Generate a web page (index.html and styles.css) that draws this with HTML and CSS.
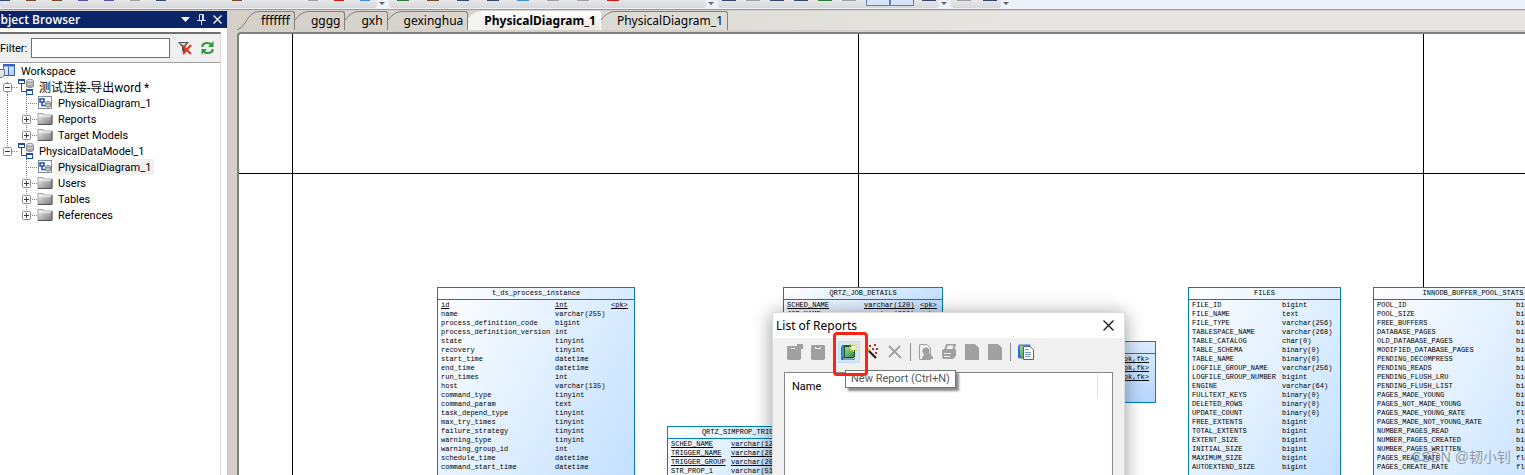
FILE: index.html
```
<!DOCTYPE html>
<html lang="en">

<head>
  <title>Physical Data Model</title>
  <meta charset="utf-8" />
  <meta name="viewport" content="width=device-width, initial-scale=1.0" />
  <link rel="stylesheet" href="styles.css">
</head>

<body>
  <!-- shared icons -->
  <svg class="sprite" aria-hidden="true">
    <defs>
      <linearGradient id="folderFill" x1="0" y1="0" x2="1" y2="1">
        <stop offset="0" stop-color="#f4f4f4" />
        <stop offset="1" stop-color="#777" />
      </linearGradient>
      <linearGradient id="greenFill" x1="0" y1="0" x2="1" y2="1">
        <stop offset="0" stop-color="#a5dca0" />
        <stop offset="1" stop-color="#2a8a33" />
      </linearGradient>
      <linearGradient id="blueFill" x1="0" y1="0" x2="1" y2="1">
        <stop offset="0" stop-color="#fff" />
        <stop offset="1" stop-color="#9fc0f5" />
      </linearGradient>
    </defs>
    <symbol id="rail" viewBox="0 0 38 16">
      <path class="dots" d="M7.500 0V16" />
    </symbol>
    <symbol id="branch" viewBox="0 0 38 16">
      <path class="dots" d="M26.500 0V16M26 8.500H37" />
    </symbol>
    <symbol id="branch-end" viewBox="0 0 38 16">
      <path class="dots" d="M26.500 0V8M26 8.500H37" />
    </symbol>
    <symbol id="plus" viewBox="0 0 9 9">
      <rect x=".5" y=".5" width="8" height="8" rx="1" fill="#fff" stroke="#8a8a8a" />
      <path d="M2 4.500H7M4.500 2V7" stroke="#24386e" />
    </symbol>
    <symbol id="minus" viewBox="0 0 9 9">
      <rect x=".5" y=".5" width="8" height="8" rx="1" fill="#fff" stroke="#8a8a8a" />
      <path d="M2 4.500H7" stroke="#24386e" />
    </symbol>
    <symbol id="folder" viewBox="0 0 16 16">
      <path d="M1 4V2.500H6L7 4H15V13.500H1Z" fill="url(#folderFill)" stroke="#a0a0a0" />
      <path d="M1.500 5H14" stroke="#fff" />
      <path d="M1 13.500H15V4.500" fill="none" stroke="#555" />
    </symbol>
    <symbol id="model" viewBox="0 0 16 16">
      <path d="M3.500 5V12.500H8" fill="none" stroke="#1d49b8" />
      <rect x=".5" y=".5" width="6" height="4" fill="#fff" stroke="#1d49b8" />
      <path d="M0 1H7" stroke="#1d49b8" stroke-width="2" />
      <rect x="8.500" y="10.500" width="6" height="5" fill="#fff" stroke="#1d49b8" />
      <path d="M8 11H15" stroke="#1d49b8" stroke-width="2" />
      <path d="M8.500 1.500V7.500Q12 10 15.500 7.500V1.500" fill="#aaa" stroke="#888" />
      <ellipse cx="12" cy="1.800" rx="3.500" ry="1.500" fill="#ddd" stroke="#999" />
      <path d="M9 4.500Q12 6 15 4.500" fill="none" stroke="#ddd" />
    </symbol>
    <symbol id="diagram" viewBox="0 0 16 16">
      <rect x="1.500" y="1.500" width="13" height="12" fill="#fff" stroke="#7f8c9c" />
      <path d="M5 7V10.500H8" fill="none" stroke="#1d49b8" stroke-width="1.500" />
      <rect x="3" y="4" width="4" height="3" fill="#fff" stroke="#1d49b8" stroke-width="1.500" />
      <path d="M8.500 7.500V11.500Q11 13 13.500 11.500V7.500" fill="#bbb" stroke="#888" />
      <ellipse cx="11" cy="7.500" rx="2.500" ry="1" fill="#ddd" stroke="#888" />
    </symbol>
  </svg>

  <header class="toolbars">
    <div class="toolbar toolbar-main">
      <i class="stub navy"></i><i class="stub brown"></i><i class="stub brown"></i><i class="stub violet"></i>
      <i class="stub violet"></i><i class="stub grey"></i><i class="stub navy"></i>
      <i class="stub brown far"></i><i class="stub grey far"></i><i class="stub red"></i><i class="stub blue"></i>
    </div>
    <i class="overflow"></i>
    <div class="toolbar toolbar-edit">
      <i class="stub green"></i><i class="stub brown"></i><i class="stub navy"></i><i class="stub navy"></i>
      <i class="stub blue"></i><i class="stub grey"></i><i class="stub grey"></i><i class="stub red"></i>
    </div>
    <i class="overflow"></i>
    <div class="toolbar toolbar-view">
      <i class="stub navy"></i><i class="stub grey"></i><i class="stub navy"></i><i class="stub navy"></i>
      <i class="stub green"></i><i class="stub grey"></i>
      <span class="pressed"><i class="stub navy"></i></span><span class="pressed"><i class="stub navy"></i></span>
      <i class="stub navy"></i>
    </div>
    <i class="overflow"></i>
    <div class="toolbar toolbar-extra"><i class="stub grey"></i><i class="stub navy"></i></div>
    <i class="overflow"></i>
  </header>

  <main class="workspace">
    <aside class="browser">
      <div class="browser-title">
        <h2>Object Browser</h2>
        <button aria-label="Menu"><svg width="9" height="9"><path d="M0 2H9L4.500 7Z" fill="#fff" /></svg></button>
        <button aria-label="Pin"><svg width="9" height="11"><path d="M2.500 6V.5H6.500V6M0 6.500H9M4.500 7V11M5.500 1V6" fill="none" stroke="#dbe2f2" /></svg></button>
        <button aria-label="Close"><svg width="9" height="9"><path d="M.5 .5L8.500 8.500M8.500 .5L.5 8.500" stroke="#fff" stroke-width="1.300" /></svg></button>
      </div>
      <div class="browser-body">
        <div class="filter">
          <label for="filter">Filter:</label>
          <input id="filter" type="text">
          <button aria-label="Clear filter">
            <svg width="15" height="14"><path d="M0 1H11L7 6V12L4 10V6Z" fill="#555" /><path d="M2 2H8L6 5Z" fill="#ddd" /><path d="M5 5L13 13M13 4L5 13" stroke="#e8321c" stroke-width="2" /></svg>
          </button>
          <button aria-label="Refresh">
            <svg width="13" height="14"><path d="M1.500 6V4Q4 1 9 2.500L10 3.500M11.500 8V10Q9 13 4 11.500L3 10.500" fill="none" stroke="#2f9a3c" stroke-width="2.200" /><path d="M12.500 0V6H7ZM.5 14V8H6Z" fill="#2f9a3c" /></svg>
          </button>
        </div>
        <ul class="tree">
          <li>
            <svg width="16" height="16"><rect x="3.500" y="1.500" width="11" height="11" fill="url(#blueFill)" stroke="#3562c4" /><path d="M3 2.500H15" stroke="#3562c4" stroke-width="2" /><path d="M8.500 4V12" stroke="#3562c4" /><path d="M0 6.500H4.500V12L2 14.500H0" fill="#dfe5ec" stroke="#66727f" /></svg>
            <span>Workspace</span>
          </li>
          <li>
            <svg width="18" height="16"><path class="dots" d="M7.500 3V16M12 8.500H18" /><use href="#minus" x="3" y="4" width="9" height="9" /></svg>
            <svg width="16" height="16"><use href="#model" /></svg>
            <span class="cjk">测试连接-导出word *</span>
          </li>
          <li>
            <svg width="37" height="16"><use href="#rail" width="38" /><use href="#branch" width="38" /></svg>
            <svg width="16" height="16"><use href="#diagram" /></svg>
            <span>PhysicalDiagram_1</span>
          </li>
          <li>
            <svg width="37" height="16"><use href="#rail" width="38" /><use href="#branch" width="38" /><use href="#plus" x="22" y="4" width="9" height="9" /></svg>
            <svg width="16" height="16"><use href="#folder" /></svg>
            <span>Reports</span>
          </li>
          <li>
            <svg width="37" height="16"><use href="#rail" width="38" /><use href="#branch-end" width="38" /><use href="#plus" x="22" y="4" width="9" height="9" /></svg>
            <svg width="16" height="16"><use href="#folder" /></svg>
            <span>Target Models</span>
          </li>
          <li>
            <svg width="18" height="16"><path class="dots" d="M7.500 0V8M12 8.500H18" /><use href="#minus" x="3" y="4" width="9" height="9" /></svg>
            <svg width="16" height="16"><use href="#model" /></svg>
            <span>PhysicalDataModel_1</span>
          </li>
          <li>
            <svg width="37" height="16"><use href="#branch" width="38" /></svg>
            <svg width="16" height="16"><use href="#diagram" /></svg>
            <span class="selected">PhysicalDiagram_1</span>
          </li>
          <li>
            <svg width="37" height="16"><use href="#branch" width="38" /><use href="#plus" x="22" y="4" width="9" height="9" /></svg>
            <svg width="16" height="16"><use href="#folder" /></svg>
            <span>Users</span>
          </li>
          <li>
            <svg width="37" height="16"><use href="#branch" width="38" /><use href="#plus" x="22" y="4" width="9" height="9" /></svg>
            <svg width="16" height="16"><use href="#folder" /></svg>
            <span>Tables</span>
          </li>
          <li>
            <svg width="37" height="16"><use href="#branch-end" width="38" /><use href="#plus" x="22" y="4" width="9" height="9" /></svg>
            <svg width="16" height="16"><use href="#folder" /></svg>
            <span>References</span>
          </li>
        </ul>
      </div>
    </aside>

    <section class="editor">
      <nav class="tabs">
        <button class="tab"><svg width="22" height="19"><path d="M0 19Q4 18 8 12Q14 .5 22 .5" /></svg><span>fffffff</span></button>
        <button class="tab"><svg width="14" height="19"><path d="M0 9Q6 .5 14 .5" /></svg><span>gggg</span></button>
        <button class="tab"><svg width="14" height="19"><path d="M0 9Q6 .5 14 .5" /></svg><span>gxh</span></button>
        <button class="tab"><svg width="14" height="19"><path d="M0 9Q6 .5 14 .5" /></svg><span>gexinghua</span></button>
        <button class="tab active"><svg width="14" height="19"><path d="M0 19V8Q6 .5 14 .5V19Z" /></svg><span>PhysicalDiagram_1</span></button>
        <button class="tab"><svg width="14" height="19"><path d="M0 9Q6 .5 14 .5" /></svg><span>PhysicalDiagram_1</span></button>
      </nav>

      <div class="diagram">
        <i class="page-v page-v1"></i>
        <i class="page-v page-v2"></i>
        <i class="page-v page-v3"></i>
        <i class="page-h"></i>

        <article class="entity process tall">
          <h3>t_ds_process_instance</h3>
          <table>
            <tr><td><u>id</u></td><td><u>int</u></td><td><u>&lt;pk&gt;</u></td></tr>
            <tr><td>name</td><td>varchar(255)</td></tr>
            <tr><td>process_definition_code</td><td>bigint</td></tr>
            <tr><td>process_definition_version</td><td>int</td></tr>
            <tr><td>state</td><td>tinyint</td></tr>
            <tr><td>recovery</td><td>tinyint</td></tr>
            <tr><td>start_time</td><td>datetime</td></tr>
            <tr><td>end_time</td><td>datetime</td></tr>
            <tr><td>run_times</td><td>int</td></tr>
            <tr><td>host</td><td>varchar(135)</td></tr>
            <tr><td>command_type</td><td>tinyint</td></tr>
            <tr><td>command_param</td><td>text</td></tr>
            <tr><td>task_depend_type</td><td>tinyint</td></tr>
            <tr><td>max_try_times</td><td>tinyint</td></tr>
            <tr><td>failure_strategy</td><td>tinyint</td></tr>
            <tr><td>warning_type</td><td>tinyint</td></tr>
            <tr><td>warning_group_id</td><td>int</td></tr>
            <tr><td>schedule_time</td><td>datetime</td></tr>
            <tr><td>command_start_time</td><td>datetime</td></tr>
          </table>
        </article>

        <article class="entity simprop">
          <h3>QRTZ_SIMPROP_TRIGGERS</h3>
          <table>
            <tr><td><u>SCHED_NAME</u></td><td><u>varchar(120)</u></td></tr>
            <tr><td><u>TRIGGER_NAME</u></td><td><u>varchar(200)</u></td></tr>
            <tr><td><u>TRIGGER_GROUP</u></td><td><u>varchar(200)</u></td></tr>
            <tr><td>STR_PROP_1</td><td>varchar(512)</td></tr>
          </table>
        </article>

        <article class="entity job">
          <h3>QRTZ_JOB_DETAILS</h3>
          <table>
            <tr><td><u>SCHED_NAME</u></td><td><u>varchar(120)</u></td><td><u>&lt;pk&gt;</u></td></tr>
            <tr><td><u>JOB_NAME</u></td><td><u>varchar(200)</u></td><td><u>&lt;pk&gt;</u></td></tr>
          </table>
        </article>

        <article class="entity trigger">
          <h3>&nbsp;</h3>
          <table>
            <tr><td><u>&lt;pk,fk&gt;</u></td></tr>
            <tr><td><u>&lt;pk,fk&gt;</u></td></tr>
            <tr><td><u>&lt;pk,fk&gt;</u></td></tr>
          </table>
        </article>

        <article class="entity files tall">
          <h3>FILES</h3>
          <table>
            <tr><td>FILE_ID</td><td>bigint</td></tr>
            <tr><td>FILE_NAME</td><td>text</td></tr>
            <tr><td>FILE_TYPE</td><td>varchar(256)</td></tr>
            <tr><td>TABLESPACE_NAME</td><td>varchar(268)</td></tr>
            <tr><td>TABLE_CATALOG</td><td>char(0)</td></tr>
            <tr><td>TABLE_SCHEMA</td><td>binary(0)</td></tr>
            <tr><td>TABLE_NAME</td><td>binary(0)</td></tr>
            <tr><td>LOGFILE_GROUP_NAME</td><td>varchar(256)</td></tr>
            <tr><td>LOGFILE_GROUP_NUMBER</td><td>bigint</td></tr>
            <tr><td>ENGINE</td><td>varchar(64)</td></tr>
            <tr><td>FULLTEXT_KEYS</td><td>binary(0)</td></tr>
            <tr><td>DELETED_ROWS</td><td>binary(0)</td></tr>
            <tr><td>UPDATE_COUNT</td><td>binary(0)</td></tr>
            <tr><td>FREE_EXTENTS</td><td>bigint</td></tr>
            <tr><td>TOTAL_EXTENTS</td><td>bigint</td></tr>
            <tr><td>EXTENT_SIZE</td><td>bigint</td></tr>
            <tr><td>INITIAL_SIZE</td><td>bigint</td></tr>
            <tr><td>MAXIMUM_SIZE</td><td>bigint</td></tr>
            <tr><td>AUTOEXTEND_SIZE</td><td>bigint</td></tr>
          </table>
        </article>

        <article class="entity pool tall">
          <h3>INNODB_BUFFER_POOL_STATS</h3>
          <table>
            <tr><td>POOL_ID</td><td>bigint</td></tr>
            <tr><td>POOL_SIZE</td><td>bigint</td></tr>
            <tr><td>FREE_BUFFERS</td><td>bigint</td></tr>
            <tr><td>DATABASE_PAGES</td><td>bigint</td></tr>
            <tr><td>OLD_DATABASE_PAGES</td><td>bigint</td></tr>
            <tr><td>MODIFIED_DATABASE_PAGES</td><td>bigint</td></tr>
            <tr><td>PENDING_DECOMPRESS</td><td>bigint</td></tr>
            <tr><td>PENDING_READS</td><td>bigint</td></tr>
            <tr><td>PENDING_FLUSH_LRU</td><td>bigint</td></tr>
            <tr><td>PENDING_FLUSH_LIST</td><td>bigint</td></tr>
            <tr><td>PAGES_MADE_YOUNG</td><td>bigint</td></tr>
            <tr><td>PAGES_NOT_MADE_YOUNG</td><td>bigint</td></tr>
            <tr><td>PAGES_MADE_YOUNG_RATE</td><td>float</td></tr>
            <tr><td>PAGES_MADE_NOT_YOUNG_RATE</td><td>float</td></tr>
            <tr><td>NUMBER_PAGES_READ</td><td>bigint</td></tr>
            <tr><td>NUMBER_PAGES_CREATED</td><td>bigint</td></tr>
            <tr><td>NUMBER_PAGES_WRITTEN</td><td>bigint</td></tr>
            <tr><td>PAGES_READ_RATE</td><td>float</td></tr>
            <tr><td>PAGES_CREATE_RATE</td><td>float</td></tr>
          </table>
        </article>

        <div class="dialog" role="dialog" aria-labelledby="dialog-title">
          <div class="dialog-title">
            <h2 id="dialog-title">List of Reports</h2>
            <button aria-label="Close"><svg width="11" height="11"><path d="M.5 .5L10.500 10.500M10.500 .5L.5 10.500" stroke="#111" stroke-width="1.200" /></svg></button>
          </div>
          <div class="dialog-tools">
            <button aria-label="Properties"><svg width="16" height="16"><path d="M0 2H10V0H16V5H14V15L13 16H1L0 15Z" fill="#a0a0a0" /><path d="M4 4.500H8" stroke="#f0f0f0" /></svg></button>
            <button aria-label="Save"><svg width="16" height="16"><path d="M2 1H14L15 2V15L14 16H2L1 15V2Z" fill="#a0a0a0" /><path d="M5.500 3V4.500H10.500V3" stroke="#f0f0f0" fill="none" /></svg></button>
            <i class="sep"></i>
            <button class="hot" aria-label="New Report"><svg width="18" height="18"><path d="M1 4L3 2H15V15L14 17H2L1 16Z" fill="#174f93" /><path d="M1.500 4L4 3V14L1.500 16Z" fill="#3e8bea" /><path d="M4.500 3.500H14.500V14.500H4.500Z" fill="url(#greenFill)" stroke="#14521a" /><path d="M3 16H13L15 14.500" stroke="#eee" fill="none" /><path d="M13.500 0V9M9 4.500H18M10 1L17 8M17 1L10 8" stroke="#f5d75c" stroke-width="1.300" /><circle cx="13.500" cy="4.500" r="2.300" fill="#fff6b8" /></svg></button>
            <button aria-label="Wizard"><svg width="16" height="16"><path d="M3 5L12 14" stroke="#222" stroke-width="2.200" /><path d="M2 4L5 7" stroke="#e6b800" stroke-width="2.500" /><path d="M5 1H7V3H5ZM10 0H12V2H10ZM12 4H14V6H12ZM8 4H10V6H8ZM11 8H13V10H11Z" fill="#c02a2a" /></svg></button>
            <button aria-label="Delete"><svg width="14" height="14"><path d="M1 1L13 13M12 1L1 12" stroke="#a0a0a0" stroke-width="1.800" /></svg></button>
            <i class="sep"></i>
            <button aria-label="Preview"><svg width="16" height="16"><path d="M1.500 .5H9L12.500 4V15.500H1.500Z" fill="none" stroke="#a0a0a0" /><circle cx="8" cy="7" r="3.500" fill="#a0a0a0" /><path d="M4 14L7 9H11L15 13V15H4Z" fill="#a0a0a0" /></svg></button>
            <button aria-label="Print"><svg width="16" height="16"><path d="M4 6L6 .5H14L12 6Z" fill="#f0f0f0" stroke="#a0a0a0" stroke-width="2" /><path d="M1 6L3 5H15V12L12 15H2L1 13Z" fill="#a0a0a0" /><path d="M3 9.500H10M3 12.500H9M8 3.500H12" stroke="#f0f0f0" /></svg></button>
            <button aria-label="Generate RTF"><svg width="16" height="16"><path d="M1 0H11L15 4V16H1Z" fill="#a0a0a0" /></svg></button>
            <button aria-label="Generate HTML"><svg width="16" height="16"><path d="M1 0H11L15 4V16H1Z" fill="#a0a0a0" /></svg></button>
            <i class="sep"></i>
            <button aria-label="Templates"><svg width="16" height="16"><path d="M0 2H3V14H0Z" fill="#2d67d8" /><path d="M1 1H12V14H2Z" fill="url(#greenFill)" stroke="#2d67d8" /><path d="M5.500 2.500H12L15.500 6V15.500H5.500Z" fill="#fff" stroke="#4b6290" /><path d="M7 5.500H11M7 8.500H13M7 10.500H13M7 12.500H12" stroke="#7793c8" /></svg></button>
          </div>
          <div class="report-list"><span>Name</span></div>
        </div>

        <div class="tooltip" role="tooltip">New Report (Ctrl+N)</div>
        <i class="marker"></i>
        <div class="watermark">CSDN @韧小钊</div>
      </div>
    </section>
  </main>
</body>

</html>
```

FILE: styles.css
```
* {
  box-sizing: border-box;
}

body {
  margin: 0;
  display: flex;
  flex-direction: column;
  height: 100vh;
  overflow: hidden;
  background: #d4d0c8;
  color: #000;
  font-family: Roboto, "Noto Sans CJK SC", sans-serif;
  font-size: 11px;
}

h2,
h3,
ul {
  margin: 0;
  padding: 0;
  font-weight: normal;
}

button {
  display: flex;
  align-items: center;
  justify-content: center;
  flex: none;
  margin: 0;
  padding: 0;
  border: 0;
  background: none;
  font: inherit;
  color: inherit;
}

svg {
  display: block;
  flex: none;
}

.sprite {
  position: absolute;
  width: 0;
  height: 0;
}

.dots {
  fill: none;
  stroke: #808080;
  stroke-dasharray: 1 1;
}

/* toolbars */
.toolbars {
  display: flex;
  flex: none;
  height: 10px;
  background: #edf2fa;
  border-bottom: 1px solid #9b9b9b;
}

.toolbar {
  display: flex;
  gap: 14px;
  height: 8px;
  padding: 0 8px;
  background: linear-gradient(#e6e7e9, #d5d7da);
  border-radius: 0 0 3px 3px;
  overflow: hidden;
}

.toolbar-main {
  flex: 0 0 377px;
  gap: 16px;
  padding-left: 0;
}

.toolbar-edit {
  flex: 0 0 317px;
}

.toolbar-view {
  flex: 0 0 221px;
  gap: 10px;
  padding: 0 4px;
}

.toolbar-extra {
  flex: 0 0 50px;
  gap: 12px;
  padding: 0 6px;
}

.stub {
  flex: none;
  width: 14px;
  height: 1px;
}

.toolbar-main .stub {
  width: 10px;
}

.toolbar-edit .stub {
  width: 12px;
  margin-right: 4px;
}

.toolbar-main .far {
  margin-left: 50px;
}

.navy {
  background: #34496b;
}

.brown {
  background: #7a4a2c;
}

.violet {
  background: #5a4fae;
}

.grey {
  background: #a2a2a2;
}

.red {
  background: #d81818;
}

.blue {
  background: #3f8fdc;
}

.green {
  background: #2d7a35;
}

.pressed {
  flex: none;
  width: 24px;
  height: 6px;
  margin-right: -10px;
  padding: 0 4px;
  background: #d5e4f8;
  border: 1px solid #5f82b0;
  border-top: 0;
}

.pressed + .stub {
  margin-left: 8px;
}

.overflow {
  flex: none;
  width: 6px;
  height: 3px;
  margin: 2px 4px 0 2px;
  border: 3px solid transparent;
  border-top: 3px solid #666;
  border-bottom: 0;
}

.workspace {
  display: flex;
  flex: 1;
  min-height: 0;
  padding-top: 1px;
}

/* object browser */
.browser {
  display: flex;
  flex-direction: column;
  flex: 0 0 228px;
  min-width: 0;
  background: #fff;
  border-right: 1px solid #c4c4c4;
}

.browser-title {
  display: flex;
  align-items: center;
  gap: 7px;
  height: 17px;
  padding-right: 5px;
  background: #0a246a;
  color: #fff;
}

.browser-title h2 {
  flex: 1;
  text-indent: -9px;
  white-space: nowrap;
  font: 600 12px/17px "Open Sans", sans-serif;
}

.browser-body {
  flex: 1;
  margin: 4px 6px 0 0;
  border-top: 2px solid #707070;
  border-right: 1px solid #d8d8d8;
}

.filter {
  display: flex;
  align-items: center;
  gap: 8px;
  height: 29px;
  background: #f0f0f0;
  border-bottom: 1px solid #a0a0a0;
}

.filter label {
  width: 23px;
  white-space: nowrap;
}

.filter input {
  width: 139px;
  min-width: 0;
  height: 20px;
  border: 1px solid #707070;
  background: #fff;
}

.tree {
  list-style: none;
}

.tree li {
  display: flex;
  height: 16px;
  line-height: 18px;
  white-space: nowrap;
}

.tree span {
  margin-left: 2px;
  padding: 0 3px;
}

.tree .selected {
  background: #f0f0f0;
}

.tree .cjk {
  font-size: 12px;
}

/* editor */
.editor {
  display: flex;
  flex-direction: column;
  flex: 1;
  min-width: 0;
  margin-left: 9px;
}

.tabs {
  display: flex;
  flex: none;
  height: 21px;
  background: linear-gradient(90deg, #d4d0c8, #e6e5e1 60%);
  border-bottom: 2px solid #d4d0c8;
  font: 12px/18px "Noto Sans", sans-serif;
}

.tab svg {
  fill: none;
  stroke: #808080;
}

.tab {
  align-items: stretch;
  height: 19px;
}

.tab span {
  height: 19px;
  padding: 0 4px 0 2px;
  border-top: 1px solid #808080;
  border-right: 1px solid #808080;
  border-radius: 0 3px 0 0;
}

.tab.active {
  font-weight: bold;
}

.tab.active svg {
  fill: #f5f4f0;
  stroke: #f5f4f0;
}

.tab.active span {
  background: linear-gradient(#fff, #ece9e2);
  border-color: #fff;
}

.diagram {
  position: relative;
  flex: 1;
  overflow: hidden;
  background: #fff;
  border-top: 2px solid #808080;
  border-left: 2px solid #808080;
  border-radius: 4px 0 0 0;
}

.page-v {
  position: absolute;
  top: 0;
  bottom: 0;
  width: 1px;
  background: #000;
}

.page-v1 {
  left: 53px;
}

.page-v2 {
  left: 619px;
}

.page-v3 {
  left: 1184px;
}

.page-h {
  position: absolute;
  top: 139px;
  left: 0;
  right: 0;
  height: 1px;
  background: #000;
}

.entity {
  position: absolute;
  background: linear-gradient(120deg, #fff, #b4d8ff);
  border: 1px solid #0080c0;
  font: 7px/9px "Liberation Mono", monospace;
}

.entity h3 {
  height: 12px;
  border-bottom: 1px solid #0080c0;
  font-size: 7px;
  line-height: 10px;
  text-align: center;
}

.entity table {
  margin: 1px 0 0 3px;
  border-collapse: collapse;
  table-layout: fixed;
}

.entity td {
  height: 9px;
  padding: 0;
  white-space: nowrap;
}

.tall {
  height: 320px;
}

.process {
  left: 198px;
  top: 253px;
  width: 198px;
}

.process td:first-child {
  width: 114px;
}

.entity td:nth-child(2) {
  width: 56px;
}

.simprop {
  left: 428px;
  top: 392px;
  width: 158px;
}

.simprop td:first-child {
  width: 60px;
}

.job {
  left: 544px;
  top: 253px;
  width: 160px;
  height: 90px;
}

.job td:first-child {
  width: 77px;
}

.trigger {
  left: 759px;
  top: 307px;
  width: 158px;
  height: 62px;
  background: linear-gradient(#dcecff, #b4d6ff);
}

.trigger table {
  margin-left: auto;
  margin-right: 6px;
}

.files {
  left: 949px;
  top: 253px;
  width: 153px;
}

.files td:first-child {
  width: 90px;
}

.pool {
  left: 1134px;
  top: 253px;
  width: 200px;
}

.pool td:first-child {
  width: 139px;
}

/* reports dialog */
.dialog {
  position: absolute;
  left: 533px;
  top: 278px;
  bottom: -20px;
  display: flex;
  flex-direction: column;
  width: 353px;
  background: #f0f0f0;
  border: 1px solid #dcdcdc;
  box-shadow: 0 2px 18px rgba(0, 0, 0, 0.4);
}

.dialog-title {
  display: flex;
  align-items: center;
  justify-content: space-between;
  height: 25px;
  padding: 0 10px 0 3px;
  background: #fff;
}

.dialog-title h2 {
  font: 12px/24px "Noto Sans", sans-serif;
}

.dialog-tools {
  display: flex;
  align-items: center;
  gap: 1px;
  height: 28px;
  padding-left: 11px;
}

.dialog-tools button {
  width: 22px;
  height: 22px;
}

.dialog-tools .hot {
  background: #d8e6f2;
  border: 1px solid #c0dcf3;
}

.sep {
  width: 1px;
  height: 18px;
  margin: 0 3px;
  background: #8c8c8c;
}

.report-list {
  display: flex;
  flex: 1;
  margin: 6px 11px 0;
  padding: 1px 14px 0 7px;
  background: #fff;
  border: 1px solid #828790;
}

.report-list span {
  flex: 1;
  height: 24px;
  border-right: 1px solid #e0e0e0;
  line-height: 26px;
}

.tooltip {
  position: absolute;
  left: 606px;
  top: 336px;
  padding: 0 5px;
  background: #fff;
  border: 1px solid #767676;
  box-shadow: 3px 3px 2px rgba(0, 0, 0, 0.45);
  color: #575757;
  line-height: 16px;
  white-space: nowrap;
}

.marker {
  position: absolute;
  left: 594px;
  top: 298px;
  width: 35px;
  height: 44px;
  border: 3px solid #fb2314;
  border-radius: 4px;
}

.watermark {
  position: absolute;
  right: 14px;
  bottom: 6px;
  color: rgba(120, 125, 132, 0.75);
  font: 14px/24px "Liberation Sans", "Noto Sans CJK SC", sans-serif;
  white-space: nowrap;
}
```
